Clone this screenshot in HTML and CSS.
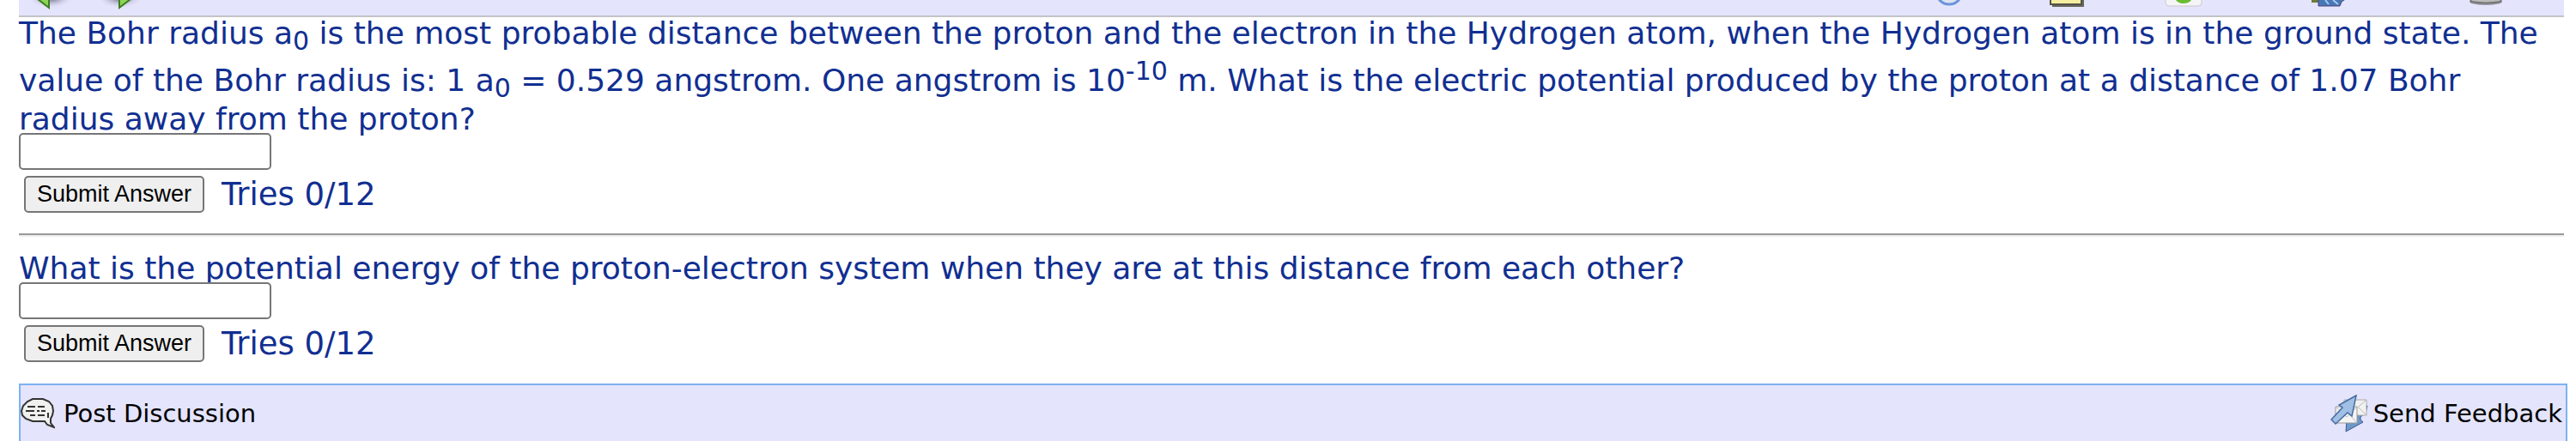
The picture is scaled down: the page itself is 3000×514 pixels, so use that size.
FILE: index.html
```html
<!DOCTYPE html>
<html lang="en">
<head>
<meta charset="utf-8">
<title>Bohr radius problem</title>
<link rel="stylesheet" href="styles.css">
</head>
<body>
<header class="toolbar">
  <nav class="tools" aria-label="Page navigation">
    <svg class="arrows" viewBox="0 0 150 18" aria-hidden="true">
      <defs><radialGradient id="shade"><stop offset="0.3" stop-color="#9a9ab2"/><stop offset="1" stop-color="#e4e4fc" stop-opacity="0"/></radialGradient></defs>
      <ellipse cx="37" cy="-3" rx="27" ry="13" fill="url(#shade)"/>
      <ellipse cx="118" cy="-3" rx="27" ry="13" fill="url(#shade)"/>
      <path d="M18-4L35 9V-4" fill="#8ed455" stroke="#3d7d22" stroke-width="2"/>
      <path d="M134-4L117 9V-4" fill="#8ed455" stroke="#3d7d22" stroke-width="2"/>
    </svg>
  </nav>
  <svg class="actions" viewBox="0 0 736 18" aria-hidden="true">
    <circle cx="20" cy="-10" r="15" fill="#dce3f0" stroke="#6c94dc" stroke-width="3"/>
    <path d="M140-2h37V8h-37z" fill="#66665a"/><path d="M138-2h36V5h-36z" fill="#f5eda0" stroke="#55554c" stroke-width="2"/>
    <rect x="272" y="-10" width="42" height="17" rx="4" fill="#f5f5f5" stroke="#c9c9cc" stroke-width="1"/><ellipse cx="293" cy="-3" rx="10" ry="7" fill="#69bb30"/>
    <path d="M442-2h9v5h-9z" fill="#6d7d3c"/><path d="M450-2h33l-6 4-2 5h-25z" fill="#4778b5" stroke="#51447a"/><path d="M458 0l4 5m5-5l6 5" fill="none" stroke="#a8c9ed" stroke-width="2"/>
    <ellipse cx="645" cy="2" rx="19" ry="4" fill="#9999a7"/><path d="M626-4l2 6q17 3 34 0l2-6z" fill="#bbb" stroke="#777" stroke-width="2"/>
  </svg>
</header>
<main class="content">
  <form class="question">
    <label class="prompt" for="potential">The Bohr radius a<sub>0</sub> is the most probable distance between the proton and the electron in the Hydrogen atom, when the Hydrogen atom is in the ground state. The value of the Bohr radius is: 1 a<sub>0</sub> = 0.529 angstrom. One angstrom is 10<sup>-10</sup> m. What is the electric potential produced by the proton at a distance of 1.07 Bohr radius away from the proton?</label>
    <input class="answer" id="potential" type="text">
    <div class="submit-row"><button class="submit" type="button">Submit Answer</button><span>Tries 0/12</span></div>
  </form>
  <hr class="divider">
  <form class="question">
    <label class="prompt" for="energy">What is the potential energy of the proton-electron system when they are at this distance from each other?</label>
    <input class="answer" id="energy" type="text">
    <div class="submit-row"><button class="submit" type="button">Submit Answer</button><span>Tries 0/12</span></div>
  </form>
</main>
<footer class="footer">
  <a class="footer-link post" href="#">
    <svg class="bubble" viewBox="0 0 40 36" aria-hidden="true">
      <path d="M14 1h12l7 3 4 5 1 6-1 5-2 4v5l4 5-8-3-3-4H14L6 24 2 20 1 15l2-6 5-5z" fill="#f0f0ee" stroke="#333" stroke-width="2"/>
      <path d="M8 10h9m3 0h8M6 15h10m3 0h3m2 0h5M11 20h6m3 0h8M32 17v6" fill="none" stroke="#333" stroke-width="2"/>
    </svg>Post Discussion</a>
  <a class="footer-link" href="#">
    <svg class="mail" viewBox="0 0 44 44" aria-hidden="true">
      <path d="M34 15l9-2-2 8-6 5v3l3 3-20 11 1-14z" fill="#6f98c9" stroke="#375b94"/>
      <path d="M16 6h26v18H16z" fill="#f1f1f1" stroke="#aaa"/><path d="M16 6l13 11L42 6M16 24l9-9m17 9l-9-9" fill="none" stroke="#bbb"/>
      <path d="M6 14h25v19H6z" fill="#f5f5f5" stroke="#999"/><path d="M6 33l9-10m16 10l-9-10M6 14l13 12 12-12" fill="none" stroke="#bbb"/>
      <path d="M30 1L10 12l4 3L1 29l5 5 14-13 5 4z" fill="#9fc0e4" stroke="#456a9f" stroke-width="1.5"/>
    </svg>Send Feedback</a>
</footer>
</body>
</html>
```

FILE: styles.css
```css
* { box-sizing: border-box; }
body {
  margin: 0;
  min-height: 100vh;
  display: flex;
  flex-direction: column;
  background: #fff;
  color: #112f91;
  font: 36px/45px Verdana, "DejaVu Sans", sans-serif;
}
.toolbar {
  display: flex;
  justify-content: space-between;
  margin: 0 14px 0 22px;
  background: #e4e4fc;
  border-bottom: 2px solid #c4c4c8;
}
.tools { display: flex; }
.arrows { width: 150px; height: 18px; }
.actions { width: 736px; height: 18px; }
.content { margin: -4px 14px 0 22px; }
.question { display: flex; flex-direction: column; align-items: flex-start; }
.prompt { display: block; }
sub, sup { font-size: 30px; }
sub { line-height: 0; vertical-align: -7px; }
sup { line-height: 44px; vertical-align: 13px; }
.answer {
  width: 294px;
  height: 43px;
  margin-top: -6px;
  padding: 2px 4px;
  border: 2px solid #767676;
  border-radius: 5px;
  background: #fff;
  font: 27px "Liberation Sans", Arial, sans-serif;
}
.submit-row {
  display: flex;
  align-items: center;
  gap: 20px;
  margin: 7px 0 0 6px;
  font-size: 37px;
  line-height: 43px;
}
.submit {
  width: 210px;
  height: 43px;
  padding: 0;
  border: 2px solid #767676;
  border-radius: 5px;
  background: #efefef;
  color: #000;
  font: 27px "Liberation Sans", Arial, sans-serif;
}
.divider {
  margin: 24px 0 14px;
  border: 0;
  border-top: 2px solid #999;
  border-bottom: 2px solid #eee;
}
.footer {
  flex: 1;
  display: flex;
  justify-content: space-between;
  align-items: flex-start;
  margin: 25px 10px 0 22px;
  padding: 11px 4px 8px 0;
  border: 2px solid #7eb1f0;
  border-bottom: 0;
  background: #e4e4fc;
}
.footer-link {
  display: flex;
  align-items: center;
  gap: 6px;
  color: #000;
  font-size: 29px;
  line-height: 44px;
  text-decoration: none;
}
.post { gap: 10px; }
.bubble { width: 40px; height: 36px; }
.mail { width: 44px; height: 44px; }
```
